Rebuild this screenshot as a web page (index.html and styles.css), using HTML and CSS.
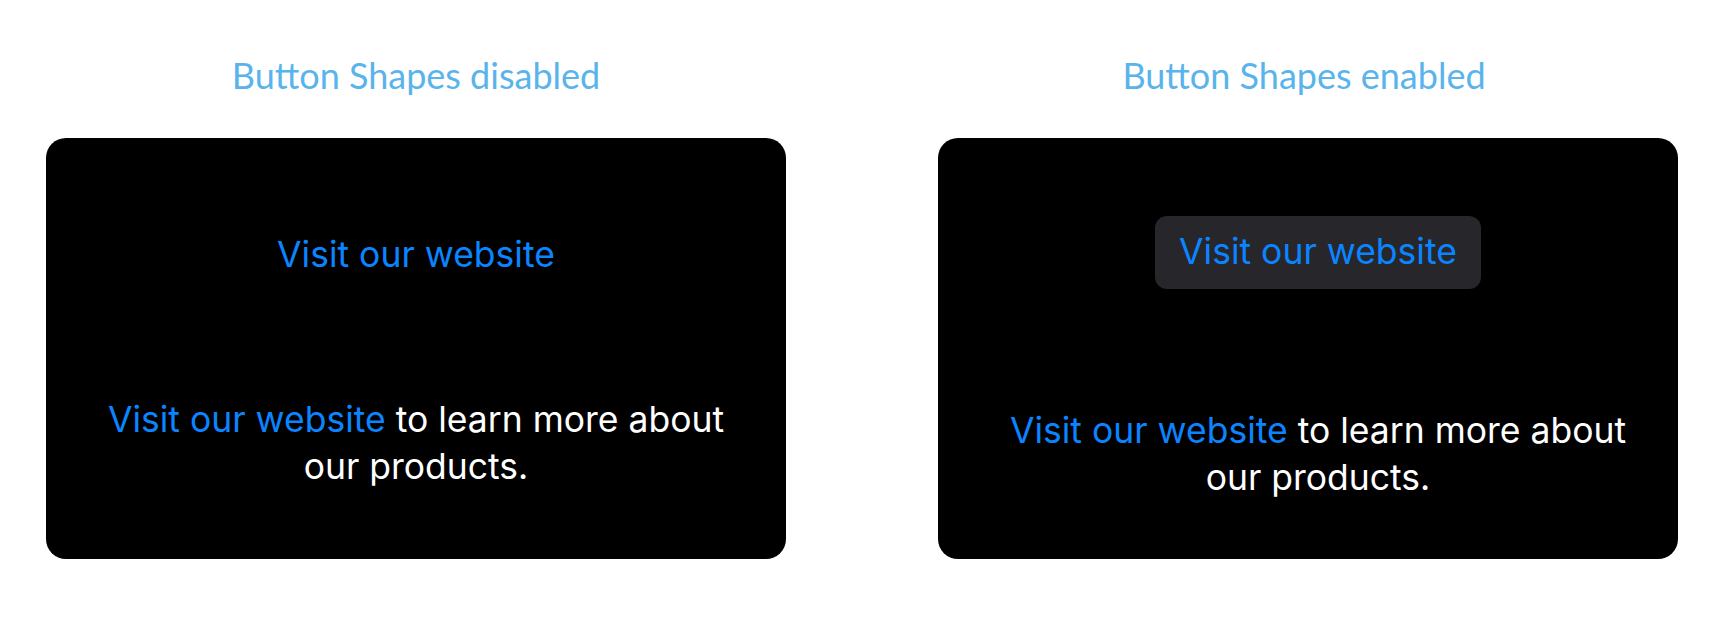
FILE: index.html
```html
<!DOCTYPE html>
<html lang="en">
<head>
  <meta charset="UTF-8" />
  <title>Button Shapes</title>
  <link rel="stylesheet" href="styles.css">
</head>
<body>

  <div id="compare">

    <div class="column">
      <div class="caption">Button Shapes disabled</div>
      <div class="screen">
        <div class="link-line"><span class="link">Visit our website</span></div>
        <p class="body-text"><span class="link">Visit our website</span> to learn more about our products.</p>
      </div>
    </div>

    <div class="column enabled">
      <div class="caption">Button Shapes enabled</div>
      <div class="screen shaped">
        <div class="link-line"><span class="link shape">Visit our website</span></div>
        <p class="body-text"><span class="link">Visit our website</span> to learn more about our products.</p>
      </div>
    </div>

  </div>

</body>
</html>
```

FILE: styles.css
```css
body {
  margin: 0;
  background-color: #fff;
  font-family: Inter, "Liberation Sans", sans-serif;
}

#compare {
  display: flex;
  gap: 152px;
  padding: 54px 0 0 46px;
}

.column {
  width: 740px;
  display: flex;
  flex-direction: column;
  align-items: center;
}

.caption {
  font-family: Lato, "Open Sans", sans-serif;
  font-size: 36px;
  line-height: 42px;
  color: #5ab4ec;
  margin-bottom: 42px;
}

.enabled .caption {
  margin-right: 8px;
}

.screen {
  width: 740px;
  height: 421px;
  box-sizing: border-box;
  background-color: #000;
  border-radius: 20px;
  padding-top: 93px;
  display: flex;
  flex-direction: column;
  align-items: center;
  color: #fff;
  font-size: 35.5px;
  line-height: 47px;
}

/* the enabled side sits a little lower and to the right */
.screen.shaped {
  padding-top: 78px;
  padding-left: 20px;
}

.link {
  color: #0a84ff;
}

.shape {
  display: inline-block;
  background-color: #27272b;
  border-radius: 12px;
  padding: 12px 24px 14px;
}

.body-text {
  width: 640px;
  margin: 118px 0 0;
  text-align: center;
}
```
